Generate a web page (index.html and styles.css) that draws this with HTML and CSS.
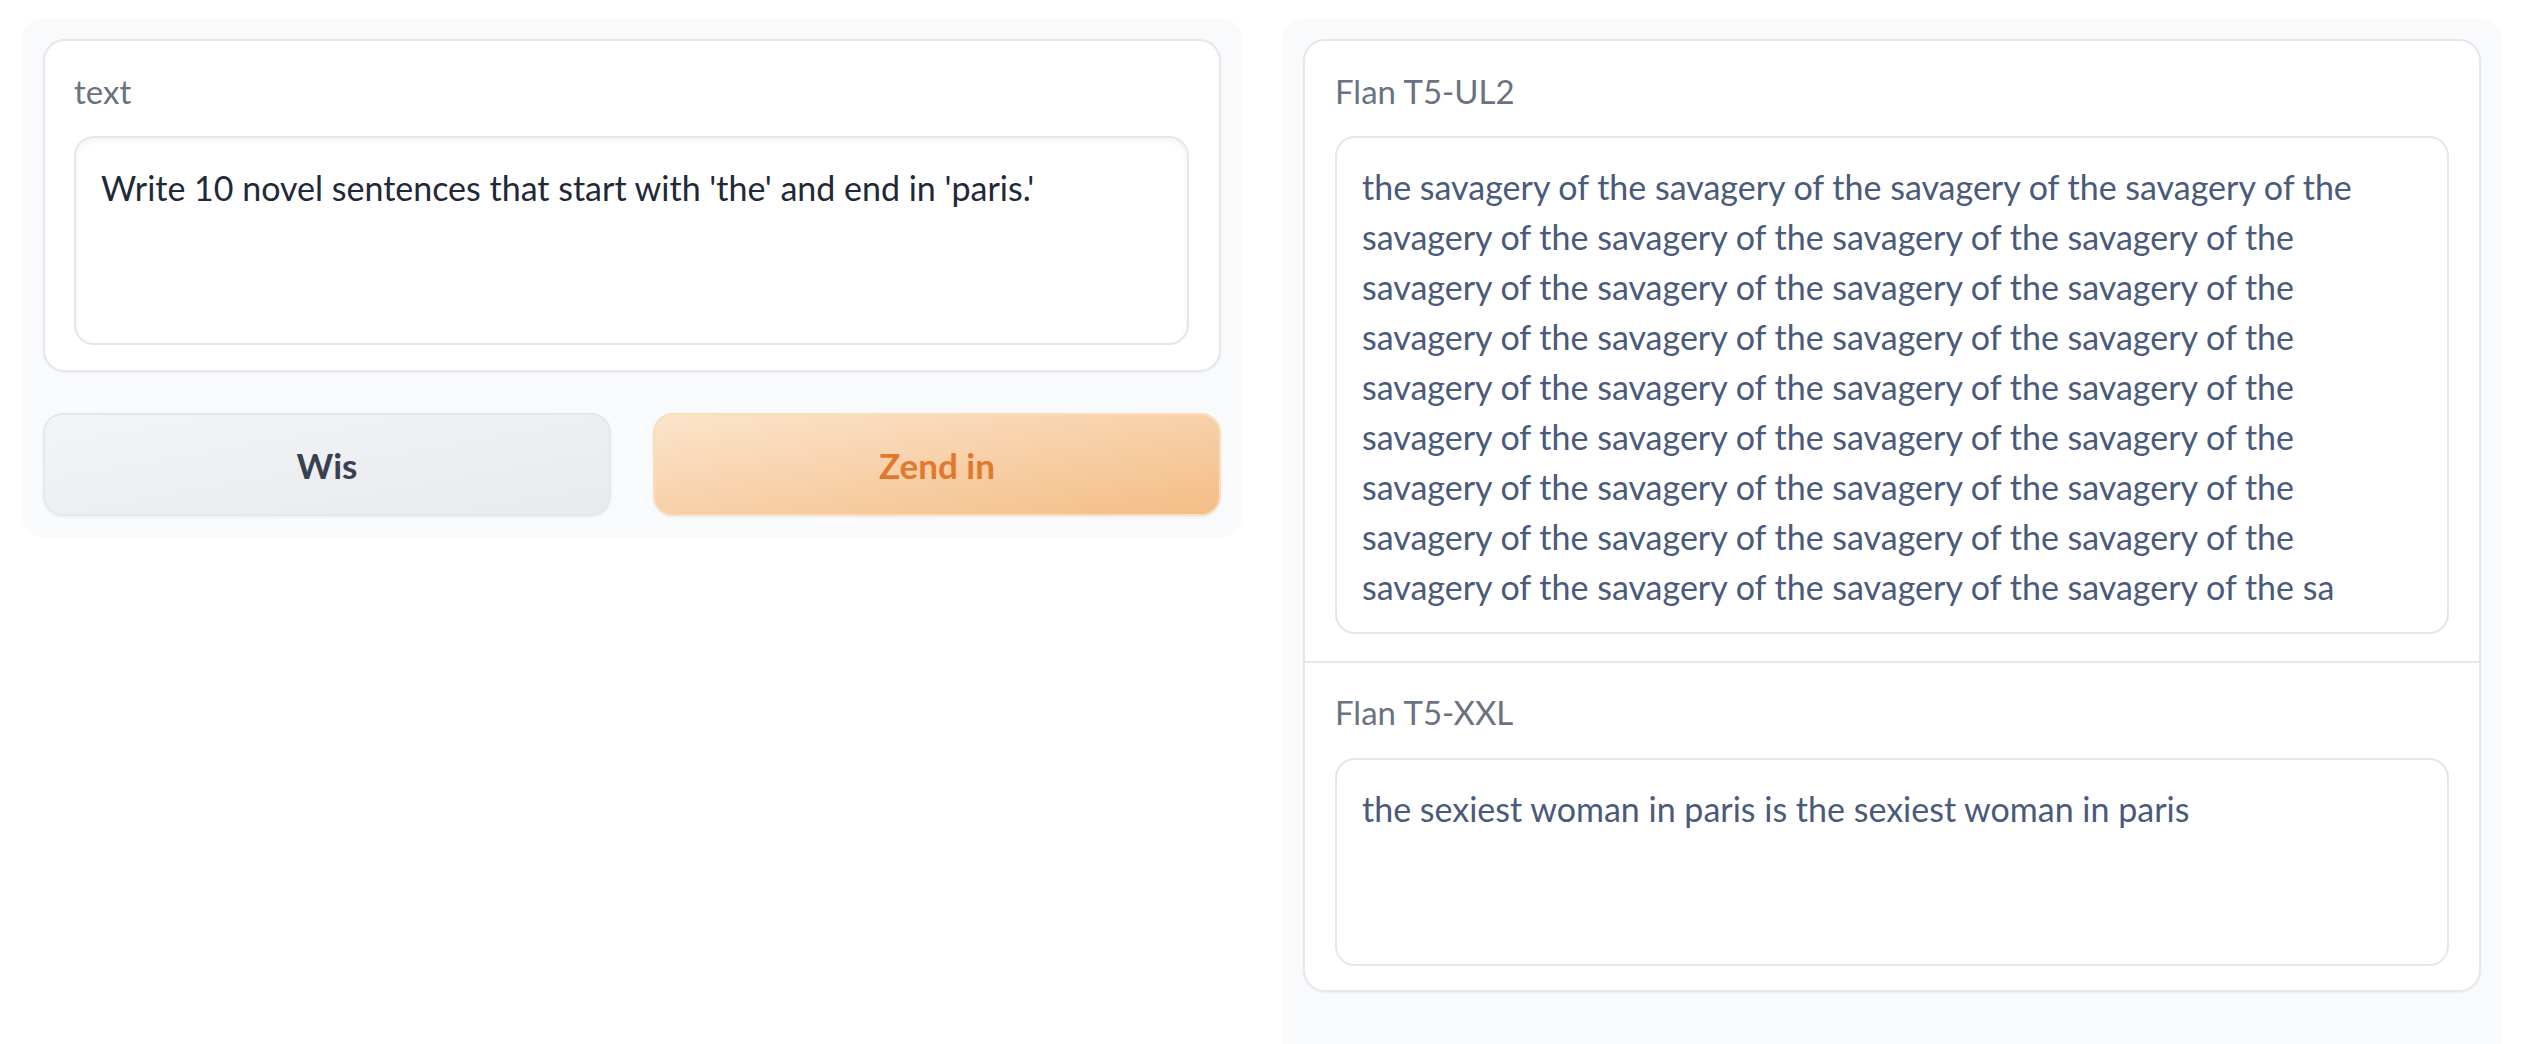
FILE: index.html
```html
<!DOCTYPE html>
<html lang="nl">
<head>
<meta charset="utf-8">
<link rel="stylesheet" href="styles.css">
</head>
<body>
<div class="app">
  <div class="panel panel-left">
    <div class="card">
      <div class="label">text</div>
      <textarea class="input" readonly>Write 10 novel sentences that start with 'the' and end in 'paris.'</textarea>
    </div>
    <div class="buttons">
      <button class="btn btn-secondary">Wis</button>
      <button class="btn btn-primary">Zend in</button>
    </div>
  </div>
  <div class="panel panel-right">
    <div class="card card-outputs">
      <div class="section">
        <div class="label">Flan T5-UL2</div>
        <div class="output output-long">the savagery of the savagery of the savagery of the savagery of the savagery of the savagery of the savagery of the savagery of the savagery of the savagery of the savagery of the savagery of the savagery of the savagery of the savagery of the savagery of the savagery of the savagery of the savagery of the savagery of the savagery of the savagery of the savagery of the savagery of the savagery of the savagery of the savagery of the savagery of the savagery of the savagery of the savagery of the savagery of the savagery of the savagery of the savagery of the savagery of the sa</div>
      </div>
      <div class="section section-second">
        <div class="label">Flan T5-XXL</div>
        <div class="output output-short">the sexiest woman in paris is the sexiest woman in paris</div>
      </div>
    </div>
  </div>
</div>
</body>
</html>
```
FILE: styles.css
```css
* { box-sizing: border-box; }

html, body {
  margin: 0;
  padding: 0;
  background: #ffffff;
  overflow: hidden;
}

body {
  font-family: "Lato", "Noto Sans", sans-serif;
  font-size: 34px;
}

.app {
  display: flex;
  align-items: flex-start;
  gap: 40px;
  padding: 19px 24px 0 22px;
}

.panel {
  flex: 1 1 0;
  background: #f9fafb;
  border-radius: 20px;
  padding: 20px 21px 21px 21px;
}

.panel-right {
  min-height: 1060px;
}

.card {
  background: #ffffff;
  border: 2px solid #e5e7eb;
  border-radius: 22px;
  padding: 30px 30px 25px 29px;
  box-shadow: 0 1px 2px rgba(0, 0, 0, 0.05);
}

.label {
  font-size: 33px;
  line-height: 40px;
  color: #6b7280;
  margin-bottom: 25px;
}

.input {
  display: block;
  width: 100%;
  height: 209px;
  margin: 0;
  padding: 25px 25px;
  font-family: "Lato", "Noto Sans", sans-serif;
  font-size: 34px;
  line-height: 50px;
  color: #1f2937;
  background: #ffffff;
  border: 2px solid #e5e7eb;
  border-radius: 20px;
  box-shadow: inset 0 3px 6px rgba(0, 0, 0, 0.05);
  resize: none;
  overflow: hidden;
  outline: none;
}

.buttons {
  display: flex;
  gap: 42px;
  margin-top: 41px;
}

.btn {
  flex: 1 1 0;
  height: 103px;
  border-radius: 20px;
  font-family: "Lato", "Noto Sans", sans-serif;
  font-size: 35px;
  font-weight: 700;
  cursor: pointer;
  box-shadow: 0 1px 3px rgba(0, 0, 0, 0.06);
}

.btn-secondary {
  color: #374151;
  border: 2px solid #e5e7eb;
  background: linear-gradient(to bottom right, #f3f4f6, #e8eaed);
}

.btn-primary {
  color: #e2782e;
  border: 2px solid #fbdcbc;
  background: linear-gradient(to bottom right, #fbe4cb, #f4bd86);
}

.card-outputs {
  padding: 0;
}

.section {
  padding: 30px 30px 27px 30px;
}

.section-second {
  border-top: 2px solid #e5e7eb;
  padding-top: 29px;
  padding-bottom: 24px;
}

.section-second .label {
  margin-bottom: 26px;
}

.output {
  border: 2px solid #e5e7eb;
  border-radius: 20px;
  background: #ffffff;
  padding: 24px 25px 20px 25px;
  font-size: 34px;
  line-height: 50px;
  color: #4a5a7b;
  overflow: hidden;
}

.output-long {
  height: 498px;
}

.output-short {
  height: 208px;
}
```
